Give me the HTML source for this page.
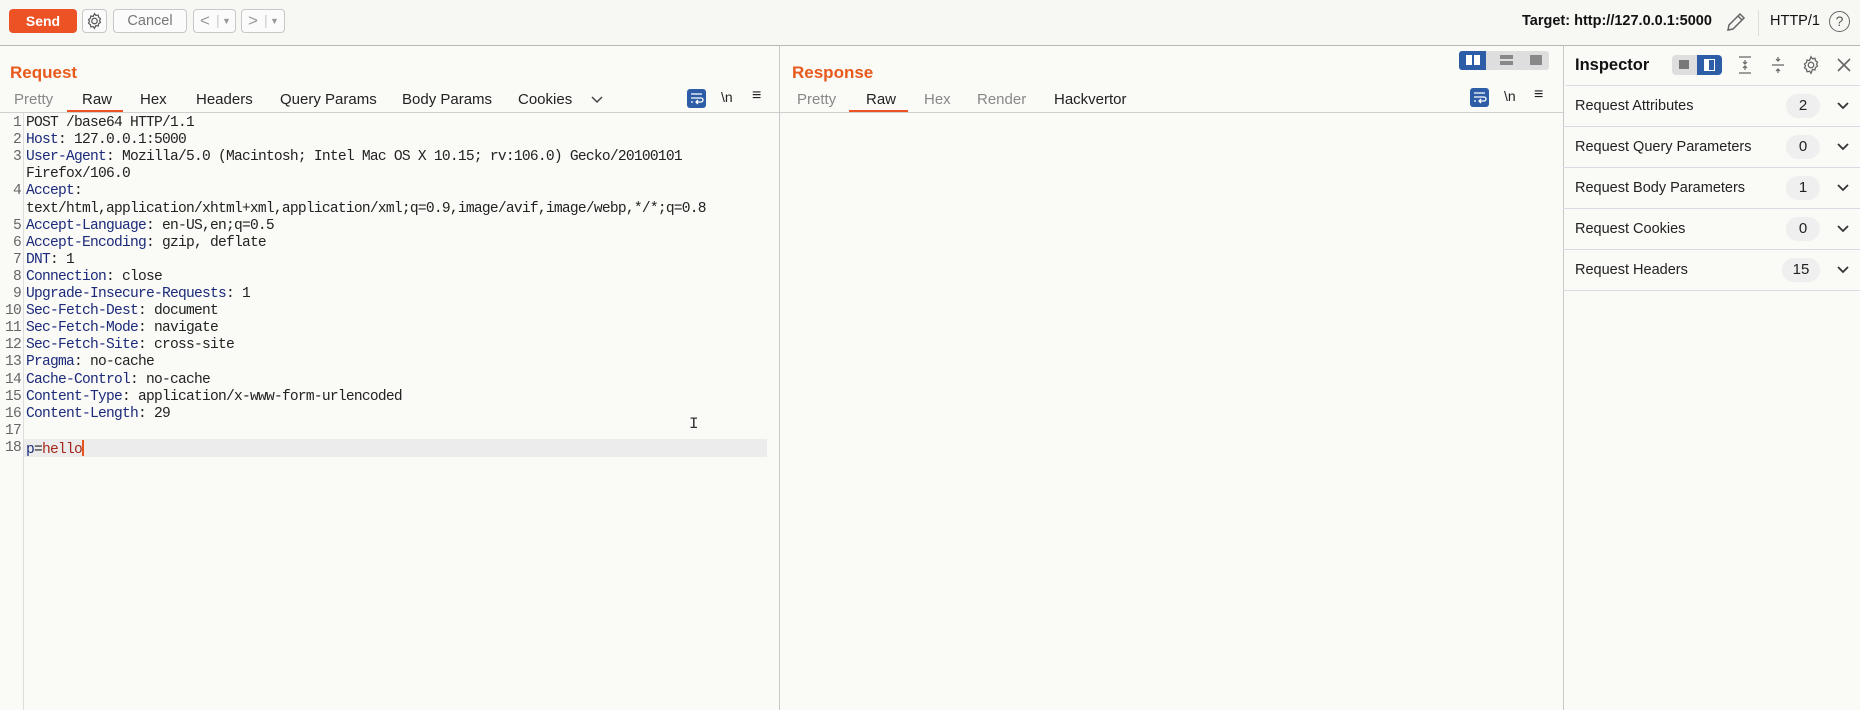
<!DOCTYPE html>
<html><head><meta charset="utf-8"><style>
*{box-sizing:border-box;margin:0;padding:0}
body{width:1860px;height:710px;overflow:hidden;background:#fafaf7;font-family:"Liberation Sans",Arial,sans-serif;color:#222;position:relative}
.a{position:absolute}
.btn{position:absolute;border:1px solid #c8c8c8;border-radius:4px;background:#fbfbfb;height:24px;top:9px}
.tab{position:absolute;top:91px;font-size:15px;color:#222}
.g{color:#888}
.code{position:absolute;left:0;top:115px;font-family:"Liberation Mono","DejaVu Sans Mono",monospace;font-size:14.6px;letter-spacing:-0.76px;line-height:17.1px;white-space:pre}
.ln{position:absolute;left:0;width:21px;text-align:right;color:#666}
.tx{position:absolute;left:26px}
.k{color:#1c2a7a}
.row{position:absolute;left:1563px;width:297px;height:41px;border-bottom:1px solid #d8dae6;font-size:14.5px}
.row span.t{position:absolute;left:12px;top:12px}
.row span.b{position:absolute;top:8px;width:34px;height:24px;border-radius:12px;background:#efefef;text-align:center;line-height:24px;font-size:15px}
.row svg{position:absolute;left:273px;top:15px}
</style></head><body>
<div class="a" style="left:0;top:0;width:1860px;height:46px;background:#f7f7f4;border-bottom:1px solid #b8b8b8"></div>
<div class="a" style="left:9px;top:9px;width:68px;height:24px;background:#ec5224;border-radius:4px;color:#fff;font-weight:bold;font-size:14px;text-align:center;line-height:24px">Send</div>
<div class="btn" style="left:82px;width:25px"><svg width="23" height="22" viewBox="0 0 24 24" style="position:absolute;left:0;top:0"><circle cx="12" cy="12" r="3" fill="none" stroke="#555" stroke-width="1.3"/><path d="M12 4l1.5 2 2.5-.5.5 2.5 2 1.5-1 2 1 2-2 1.5-.5 2.5-2.5-.5L12 20l-1.5-2-2.5.5-.5-2.5-2-1.5 1-2-1-2 2-1.5.5-2.5 2.5.5z" fill="none" stroke="#555" stroke-width="1.3"/></svg></div>
<div class="btn" style="left:113px;width:74px;text-align:center;line-height:22px;font-size:14.5px;color:#777">Cancel</div>
<div class="btn" style="left:193px;width:43px;color:#999;font-size:14px;line-height:22px"><span style="position:absolute;left:6px;font-size:17px">&lt;</span><span style="position:absolute;left:22px;top:-1px;color:#ccc">|</span><span style="position:absolute;left:28px;font-size:9px">▼</span></div>
<div class="btn" style="left:241px;width:44px;color:#999;font-size:14px;line-height:22px"><span style="position:absolute;left:6px;font-size:17px">&gt;</span><span style="position:absolute;left:22px;top:-1px;color:#ccc">|</span><span style="position:absolute;left:28px;font-size:9px">▼</span></div>
<div class="a" style="left:1522px;top:13px;font-weight:bold;font-size:14.5px;color:#111">Target: http://127.0.0.1:5000</div>
<svg class="a" style="left:1724px;top:10px" width="24" height="24" viewBox="0 0 24 24"><path d="M4 20l1-5L16 4l4 4L9 19z M14 6l4 4" fill="none" stroke="#666" stroke-width="1.5"/></svg>
<div class="a" style="left:1758px;top:10px;width:1px;height:26px;background:#ddd"></div>
<div class="a" style="left:1770px;top:13px;font-size:14.5px;color:#111">HTTP/1</div>
<div class="a" style="left:1829px;top:11px;width:21px;height:21px;border:1.5px solid #666;border-radius:50%;text-align:center;font-size:14px;line-height:18px;color:#555">?</div>

<div class="a" style="left:779px;top:46px;width:1px;height:664px;background:#c8c8c8"></div>
<div class="a" style="left:1563px;top:46px;width:1px;height:664px;background:#c8c8c8"></div>

<div class="a" style="left:10px;top:63px;font-weight:bold;font-size:17px;color:#e85a1c">Request</div>
<div class="tab g" style="left:14px">Pretty</div>
<div class="tab" style="left:82px">Raw</div>
<div class="a" style="left:67px;top:110px;width:56px;height:2px;background:#ec5224"></div>
<div class="tab" style="left:140px">Hex</div>
<div class="tab" style="left:196px">Headers</div>
<div class="tab" style="left:280px">Query Params</div>
<div class="tab" style="left:402px">Body Params</div>
<div class="tab" style="left:518px">Cookies</div>
<svg class="a" style="left:590px;top:95px" width="14" height="10" viewBox="0 0 14 10"><path d="M2 2l5 5 5-5" fill="none" stroke="#444" stroke-width="1.5"/></svg>
<div class="a" style="left:687px;top:89px;width:19px;height:19px;background:#2d5da7;border-radius:3px"><svg width="19" height="19" viewBox="0 0 19 19"><path d="M4 5h11 M4 9h10a2 2 0 010 4H9 M11 11l-2 2 2 2 M4 13h2" fill="none" stroke="#fff" stroke-width="1.3"/></svg></div>
<div class="a" style="left:721px;top:89px;font-size:14px">\n</div>
<div class="a" style="left:752px;top:87px;font-size:16px">≡</div>
<div class="a" style="left:0;top:112px;width:779px;height:1px;background:#d0d0d0"></div>
<div class="a" style="left:23px;top:113px;width:1px;height:597px;background:#ddd"></div>
<div class="a" style="left:24px;top:439px;width:743px;height:18px;background:#ececec"></div>

<div class="code">
<div class="ln" style="top:0">1</div><div class="tx" style="top:0">POST /base64 HTTP/1.1</div>
<div class="ln" style="top:17.1px">2</div><div class="tx" style="top:17.1px"><span class="k">Host</span>: 127.0.0.1:5000</div>
<div class="ln" style="top:34.2px">3</div><div class="tx" style="top:34.2px"><span class="k">User-Agent</span>: Mozilla/5.0 (Macintosh; Intel Mac OS X 10.15; rv:106.0) Gecko/20100101</div>
<div class="tx" style="top:51.3px">Firefox/106.0</div>
<div class="ln" style="top:68.4px">4</div><div class="tx" style="top:68.4px"><span class="k">Accept</span>:</div>
<div class="tx" style="top:85.5px">text/html,application/xhtml+xml,application/xml;q=0.9,image/avif,image/webp,*/*;q=0.8</div>
<div class="ln" style="top:102.6px">5</div><div class="tx" style="top:102.6px"><span class="k">Accept-Language</span>: en-US,en;q=0.5</div>
<div class="ln" style="top:119.7px">6</div><div class="tx" style="top:119.7px"><span class="k">Accept-Encoding</span>: gzip, deflate</div>
<div class="ln" style="top:136.8px">7</div><div class="tx" style="top:136.8px"><span class="k">DNT</span>: 1</div>
<div class="ln" style="top:153.9px">8</div><div class="tx" style="top:153.9px"><span class="k">Connection</span>: close</div>
<div class="ln" style="top:171px">9</div><div class="tx" style="top:171px"><span class="k">Upgrade-Insecure-Requests</span>: 1</div>
<div class="ln" style="top:188.1px">10</div><div class="tx" style="top:188.1px"><span class="k">Sec-Fetch-Dest</span>: document</div>
<div class="ln" style="top:205.2px">11</div><div class="tx" style="top:205.2px"><span class="k">Sec-Fetch-Mode</span>: navigate</div>
<div class="ln" style="top:222.3px">12</div><div class="tx" style="top:222.3px"><span class="k">Sec-Fetch-Site</span>: cross-site</div>
<div class="ln" style="top:239.4px">13</div><div class="tx" style="top:239.4px"><span class="k">Pragma</span>: no-cache</div>
<div class="ln" style="top:256.5px">14</div><div class="tx" style="top:256.5px"><span class="k">Cache-Control</span>: no-cache</div>
<div class="ln" style="top:273.6px">15</div><div class="tx" style="top:273.6px"><span class="k">Content-Type</span>: application/x-www-form-urlencoded</div>
<div class="ln" style="top:290.7px">16</div><div class="tx" style="top:290.7px"><span class="k">Content-Length</span>: 29</div>
<div class="ln" style="top:307.8px">17</div>
<div class="ln" style="top:324.9px">18</div><div class="tx" style="top:324.9px"><span class="k">p</span>=<span style="color:#a3281a">hello</span><span style="display:inline-block;width:2px;height:16px;background:#e8521c;vertical-align:-3px"></span></div>
</div>
<div class="a" style="left:689px;top:415px;font-family:'Liberation Mono',monospace;font-size:16px;color:#333">I</div>

<div class="a" style="left:792px;top:63px;font-weight:bold;font-size:17px;color:#e85a1c">Response</div>
<div class="tab g" style="left:797px">Pretty</div>
<div class="tab" style="left:866px">Raw</div>
<div class="a" style="left:849px;top:110px;width:59px;height:2px;background:#ec5224"></div>
<div class="tab g" style="left:924px">Hex</div>
<div class="tab g" style="left:977px">Render</div>
<div class="tab" style="left:1054px">Hackvertor</div>
<div class="a" style="left:780px;top:112px;width:783px;height:1px;background:#d0d0d0"></div>
<div class="a" style="left:1459px;top:51px;width:90px;height:19px;background:#dedede;border-radius:3px"></div>
<div class="a" style="left:1459px;top:51px;width:27px;height:19px;background:#2d5da7;border-radius:3px 0 0 3px"></div>
<div class="a" style="left:1466px;top:55px;width:6px;height:10px;background:#fff"></div>
<div class="a" style="left:1474px;top:55px;width:6px;height:10px;background:#fff"></div>
<div class="a" style="left:1500px;top:55px;width:13px;height:4px;background:#888"></div>
<div class="a" style="left:1500px;top:61px;width:13px;height:4px;background:#888"></div>
<div class="a" style="left:1530px;top:55px;width:12px;height:10px;background:#888"></div>
<div class="a" style="left:1470px;top:88px;width:19px;height:19px;background:#2d5da7;border-radius:3px"><svg width="19" height="19" viewBox="0 0 19 19"><path d="M4 5h11 M4 9h10a2 2 0 010 4H9 M11 11l-2 2 2 2 M4 13h2" fill="none" stroke="#fff" stroke-width="1.3"/></svg></div>
<div class="a" style="left:1504px;top:88px;font-size:14px">\n</div>
<div class="a" style="left:1534px;top:86px;font-size:16px">≡</div>

<div class="a" style="left:1575px;top:56px;font-weight:bold;font-size:16.5px;color:#111">Inspector</div>
<div class="a" style="left:1672px;top:55px;width:50px;height:20px;background:#dedede;border-radius:4px"></div>
<div class="a" style="left:1697px;top:55px;width:25px;height:20px;background:#2d5da7;border-radius:0 4px 4px 0"></div>
<div class="a" style="left:1679px;top:60px;width:10px;height:9px;background:#777"></div>
<div class="a" style="left:1704px;top:59px;width:11px;height:12px;border:1.5px solid #fff;border-left-width:5px"></div>
<svg class="a" style="left:1737px;top:55px" width="16" height="20" viewBox="0 0 16 20"><path d="M2 2h12M2 18h12M8 5v3M6 7l2 2 2-2M8 15v-3M6 13l2-2 2 2" fill="none" stroke="#666" stroke-width="1.2"/></svg>
<svg class="a" style="left:1770px;top:55px" width="16" height="20" viewBox="0 0 16 20"><path d="M2 10h12M8 2v4M6 4l2 2 2-2M8 18v-4M6 16l2-2 2 2" fill="none" stroke="#666" stroke-width="1.2"/></svg>
<svg class="a" style="left:1800px;top:54px" width="22" height="22" viewBox="0 0 24 24"><circle cx="12" cy="12" r="3" fill="none" stroke="#666" stroke-width="1.4"/><path d="M12 3l1.6 2.2 2.7-.6.6 2.7 2.2 1.6-1.1 2.1 1.1 2.1-2.2 1.6-.6 2.7-2.7-.6L12 21l-1.6-2.2-2.7.6-.6-2.7-2.2-1.6 1.1-2.1-1.1-2.1 2.2-1.6.6-2.7 2.7.6z" fill="none" stroke="#666" stroke-width="1.4"/></svg>
<svg class="a" style="left:1836px;top:57px" width="16" height="16" viewBox="0 0 16 16"><path d="M2 2l12 12M14 2L2 14" stroke="#666" stroke-width="1.6"/></svg>
<div class="a" style="left:1566px;top:85px;width:294px;height:1px;background:#d8dae6"></div>

<div class="row" style="top:86px"><span class="t">Request Attributes</span><span class="b" style="left:223px">2</span><svg width="14" height="10" viewBox="0 0 14 10"><path d="M2 2l5 5 5-5" fill="none" stroke="#333" stroke-width="1.8"/></svg></div>
<div class="row" style="top:127px"><span class="t">Request Query Parameters</span><span class="b" style="left:223px">0</span><svg width="14" height="10" viewBox="0 0 14 10"><path d="M2 2l5 5 5-5" fill="none" stroke="#333" stroke-width="1.8"/></svg></div>
<div class="row" style="top:168px"><span class="t">Request Body Parameters</span><span class="b" style="left:223px">1</span><svg width="14" height="10" viewBox="0 0 14 10"><path d="M2 2l5 5 5-5" fill="none" stroke="#333" stroke-width="1.8"/></svg></div>
<div class="row" style="top:209px"><span class="t">Request Cookies</span><span class="b" style="left:223px">0</span><svg width="14" height="10" viewBox="0 0 14 10"><path d="M2 2l5 5 5-5" fill="none" stroke="#333" stroke-width="1.8"/></svg></div>
<div class="row" style="top:250px"><span class="t">Request Headers</span><span class="b" style="left:219px;width:38px">15</span><svg width="14" height="10" viewBox="0 0 14 10"><path d="M2 2l5 5 5-5" fill="none" stroke="#333" stroke-width="1.8"/></svg></div>
</body></html>
